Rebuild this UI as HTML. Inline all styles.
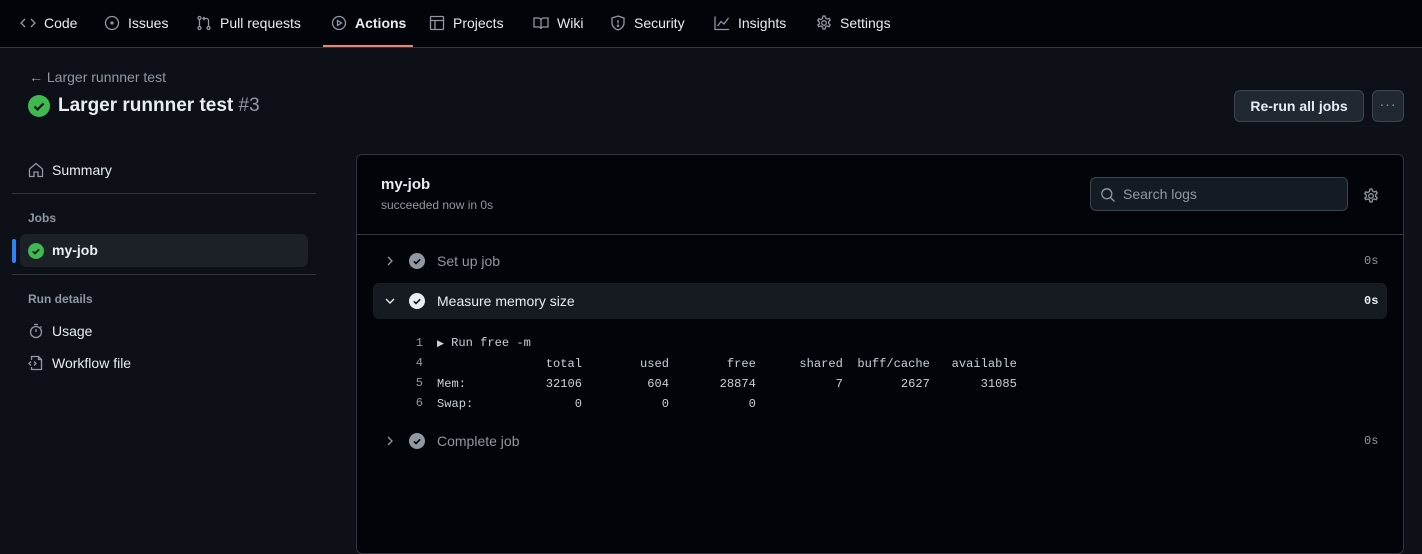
<!DOCTYPE html>
<html><head><style>
*{margin:0;padding:0;box-sizing:border-box}
body{width:1422px;height:540px;background:#0d1117;color:#e6edf3;font-family:"Liberation Sans",sans-serif;font-size:14px;position:relative;overflow:hidden}
.a{position:absolute}
.nav{left:0;top:0;width:1422px;height:48px;background:#010409;border-bottom:1px solid #30363d}
.ni{position:absolute;top:15px;font-size:14px;color:#e6edf3;display:flex;align-items:center;gap:8px;white-space:nowrap}
.ni svg{width:16px;height:16px;fill:none;stroke:#9198a1;stroke-width:1.3}
.mono{font-family:"Liberation Mono",monospace;font-size:12px}
.g{color:#9198a1}
svg.i{fill:none;stroke:#9198a1;stroke-width:1.3}
</style></head><body>
<div class="a nav"></div>
<div class="ni" style="left:20px"><svg viewBox="0 0 16 16"><path d="M5 4L1 8l4 4M11 4l4 4-4 4"/></svg>Code</div>
<div class="ni" style="left:104px"><svg viewBox="0 0 16 16"><circle cx="8" cy="8" r="6.5"/><circle cx="8" cy="8" r="1" fill="#9198a1"/></svg>Issues</div>
<div class="ni" style="left:196px"><svg viewBox="0 0 16 16"><circle cx="3.5" cy="3" r="1.5"/><circle cx="3.5" cy="13" r="1.5"/><circle cx="12.5" cy="13" r="1.5"/><path d="M3.5 4.5v7M12.5 11.5V5.5a2 2 0 0 0-2-2H7M8.5 2L7 3.5 8.5 5"/></svg>Pull requests</div>
<div class="ni" style="left:331px;font-weight:bold"><svg viewBox="0 0 16 16"><circle cx="8" cy="8" r="6.5"/><path d="M6.5 5.5v5l4-2.5z"/></svg>Actions</div>
<div class="a" style="left:323px;top:45px;width:90px;height:2px;background:#f78166"></div>
<div class="ni" style="left:429px"><svg viewBox="0 0 16 16"><rect x="1.5" y="1.5" width="13" height="13" rx="1"/><path d="M1.5 5.5h13M6 5.5v9"/></svg>Projects</div>
<div class="ni" style="left:533px"><svg viewBox="0 0 16 16"><path d="M1 3h4.5a2.5 2.5 0 0 1 2.5 2.5V14a2 2 0 0 0-2-2H1zM15 3h-4.5A2.5 2.5 0 0 0 8 5.5V14a2 2 0 0 1 2-2h5z"/></svg>Wiki</div>
<div class="ni" style="left:610px"><svg viewBox="0 0 16 16"><path d="M8 1l6 2v5c0 3.5-3 6-6 7-3-1-6-3.5-6-7V3z"/><path d="M8 5v3.5"/><circle cx="8" cy="10.8" r=".6"/></svg>Security</div>
<div class="ni" style="left:714px"><svg viewBox="0 0 16 16"><path d="M1 1.5v13h14M3.5 11l3.5-4.5 3 2.5 4.5-6"/></svg>Insights</div>
<div class="ni" style="left:816px"><svg viewBox="0 0 16 16"><circle cx="8" cy="8" r="2.3"/><path d="M7 1h2l.5 2 1.7 1 2-.7 1 1.7-1.5 1.5v2l1.5 1.5-1 1.7-2-.7-1.7 1-.5 2H7l-.5-2-1.7-1-2 .7-1-1.7L3.3 9V7L1.8 5.5l1-1.7 2 .7 1.7-1z"/></svg>Settings</div>

<div class="a" style="left:29px;top:69px;font-size:14px;color:#9198a1">← Larger runnner test</div>
<svg class="a" style="left:28px;top:95px" width="22" height="22" viewBox="0 0 22 22"><circle cx="11" cy="11" r="11" fill="#3fb950"/><path d="M6.5 11.5l3 3 6-6" stroke="#0d1117" stroke-width="2.2" fill="none"/></svg>
<div class="a" style="left:58px;top:95px;font-size:19px;font-weight:bold;color:#e6edf3">Larger runnner test <span style="font-weight:normal;color:#9198a1">#3</span></div>

<div class="a" style="left:1234px;top:90px;width:130px;height:32px;border:1px solid #3d444d;border-radius:6px;background:#212830;font-weight:bold;font-size:14px;text-align:center;line-height:30px">Re-run all jobs</div>
<div class="a" style="left:1372px;top:90px;width:32px;height:32px;border:1px solid #3d444d;border-radius:6px;background:#212830;color:#9198a1;text-align:center;line-height:26px;letter-spacing:1px">···</div>

<svg class="a i" style="left:28px;top:162px" width="16" height="16" viewBox="0 0 16 16"><path d="M1.5 7L8 1.5 14.5 7v7.5h-4.5v-4.5h-4v4.5H1.5z"/></svg>
<div class="a" style="left:52px;top:162px">Summary</div>
<div class="a" style="left:12px;top:193px;width:304px;height:1px;background:#30363d"></div>
<div class="a" style="left:28px;top:211px;font-size:12px;color:#9198a1;font-weight:bold">Jobs</div>
<div class="a" style="left:20px;top:234px;width:288px;height:33px;background:#1c2128;border-radius:6px"></div>
<div class="a" style="left:12px;top:239px;width:4px;height:24px;background:#2f81f7;border-radius:2px"></div>
<svg class="a" style="left:28px;top:243px" width="16" height="16" viewBox="0 0 16 16"><circle cx="8" cy="8" r="8" fill="#3fb950"/><path d="M4.8 8.3l2.2 2.2 4.2-4.2" stroke="#0d1117" stroke-width="1.6" fill="none"/></svg>
<div class="a" style="left:52px;top:242px;font-weight:bold">my-job</div>
<div class="a" style="left:12px;top:274px;width:304px;height:1px;background:#30363d"></div>
<div class="a" style="left:28px;top:292px;font-size:12px;color:#9198a1;font-weight:bold">Run details</div>
<svg class="a i" style="left:28px;top:323px" width="16" height="16" viewBox="0 0 16 16"><circle cx="8" cy="9" r="5.5"/><path d="M6 1.5h4M8 9V6M12.5 3.5l1 1"/></svg>
<div class="a" style="left:52px;top:323px">Usage</div>
<svg class="a i" style="left:28px;top:355px" width="16" height="16" viewBox="0 0 16 16"><path d="M3.5 5V1.5h7l3 3v10h-10V12M10.5 1.5v3h3M3 6.5L1 8.5l2 2M6 6.5l2 2-2 2"/></svg>
<div class="a" style="left:52px;top:355px">Workflow file</div>

<div class="a" style="left:356px;top:154px;width:1048px;height:400px;background:#010409;border:1px solid #30363d;border-radius:6px"></div>
<div class="a" style="left:381px;top:176px;font-weight:bold;font-size:15px">my-job</div>
<div class="a" style="left:381px;top:198px;font-size:12px;color:#9198a1">succeeded now in 0s</div>
<div class="a" style="left:1090px;top:177px;width:258px;height:34px;border:1px solid #3d444d;border-radius:6px;background:#151b23"></div>
<svg class="a i" style="left:1100px;top:187px" width="16" height="16" viewBox="0 0 16 16"><circle cx="6.8" cy="6.8" r="5"/><path d="M10.5 10.5l4 4"/></svg>
<div class="a" style="left:1123px;top:186px;color:#9198a1">Search logs</div>
<svg class="a i" style="left:1363px;top:188px" width="16" height="16" viewBox="0 0 16 16"><circle cx="8" cy="8" r="2.3"/><path d="M7 1h2l.5 2 1.7 1 2-.7 1 1.7-1.5 1.5v2l1.5 1.5-1 1.7-2-.7-1.7 1-.5 2H7l-.5-2-1.7-1-2 .7-1-1.7L3.3 9V7L1.8 5.5l1-1.7 2 .7 1.7-1z"/></svg>
<div class="a" style="left:357px;top:234px;width:1046px;height:1px;background:#30363d"></div>

<svg class="a i" style="left:383px;top:253px" width="14" height="16" viewBox="0 0 14 16"><path d="M5 4l4 4-4 4"/></svg>
<svg class="a" style="left:409px;top:253px" width="16" height="16" viewBox="0 0 16 16"><circle cx="8" cy="8" r="8" fill="#9198a1"/><path d="M4.8 8.3l2.2 2.2 4.2-4.2" stroke="#010409" stroke-width="1.6" fill="none"/></svg>
<div class="a" style="left:437px;top:253px;color:#9198a1">Set up job</div>
<div class="a mono g" style="left:1364px;top:254px">0s</div>

<div class="a" style="left:373px;top:283px;width:1014px;height:36px;background:#161b22;border-radius:6px"></div>
<svg class="a" style="left:382px;top:293px" width="16" height="16" viewBox="0 0 16 16"><path d="M4 6l4 4 4-4" stroke="#e6edf3" stroke-width="1.4" fill="none"/></svg>
<svg class="a" style="left:409px;top:293px" width="16" height="16" viewBox="0 0 16 16"><circle cx="8" cy="8" r="8" fill="#e6edf3"/><path d="M4.8 8.3l2.2 2.2 4.2-4.2" stroke="#161b22" stroke-width="1.6" fill="none"/></svg>
<div class="a" style="left:437px;top:293px">Measure memory size</div>
<div class="a mono" style="left:1364px;top:294px;font-weight:bold">0s</div>

<pre class="a mono g" style="left:413px;top:333px;line-height:20px;text-align:right;width:10px">1
4
5
6</pre>
<pre class="a mono" style="left:437px;top:333px;line-height:20px;color:#c9d1d9;font-size:12.08px"><span style="font-size:9px">▶</span> Run free -m
               total        used        free      shared  buff/cache   available
Mem:           32106         604       28874           7        2627       31085
Swap:              0           0           0</pre>

<svg class="a i" style="left:383px;top:433px" width="14" height="16" viewBox="0 0 14 16"><path d="M5 4l4 4-4 4"/></svg>
<svg class="a" style="left:409px;top:433px" width="16" height="16" viewBox="0 0 16 16"><circle cx="8" cy="8" r="8" fill="#9198a1"/><path d="M4.8 8.3l2.2 2.2 4.2-4.2" stroke="#010409" stroke-width="1.6" fill="none"/></svg>
<div class="a" style="left:437px;top:433px;color:#9198a1">Complete job</div>
<div class="a mono g" style="left:1364px;top:434px">0s</div>
</body></html>
